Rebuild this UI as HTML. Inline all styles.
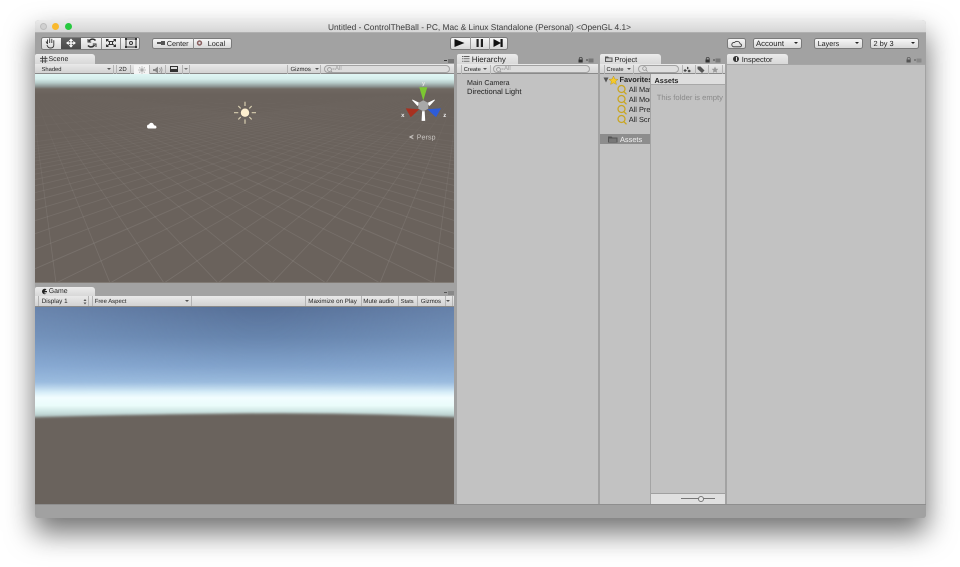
<!DOCTYPE html>
<html><head><meta charset="utf-8"><title>Untitled - ControlTheBall</title>
<style>
html,body{margin:0;padding:0;background:#fff;width:960px;height:567px;overflow:hidden}
*{box-sizing:border-box}
body{font-family:"Liberation Sans",sans-serif;color:#222;text-rendering:geometricPrecision}
.a,.t,.b,.tab,.bar,.p{position:absolute}
#shadow{position:absolute;left:35px;top:20px;width:890.500px;height:497px;border-radius:4px;box-shadow:0 15px 28px 1px rgba(0,0,0,.55)}
#win{position:absolute;left:35px;top:19.500px;width:890.500px;height:498px;background:#a2a2a2;border-radius:4px 4px 3px 3px;overflow:hidden;filter:blur(.25px)}
#in{position:absolute;left:-35px;top:-19.500px;width:960px;height:567px}
.t{white-space:nowrap;font-size:7.400px;line-height:10px;color:#222}
.b{background:linear-gradient(#f6f6f6,#d8d8d8);border:1px solid #7a7a7a;border-radius:2.500px}
.tab{background:linear-gradient(#ebebeb,#d8d8d8);border-radius:2px 3px 0 0;top:54.300px;height:10px}
.bar{background:linear-gradient(#e9e9e9,#d3d3d3);border-bottom:1px solid #8a8a8a}
.p{background:#c2c2c2}
.v{position:absolute;width:1px;background:#b4b4b4}
.s{position:absolute;border:1px solid #a2a2a2;border-radius:5px;background:#dcdcdc;height:8px}
.ar{position:absolute;width:0;height:0;border:2px solid transparent;border-top:2.500px solid #555;border-bottom:0}
svg{position:absolute;overflow:visible}
</style></head><body>
<div id="shadow"></div>
<div id="win"><div id="in">

<!-- title bar -->
<div class="a" style="left:35px;top:19px;width:891px;height:14px;background:linear-gradient(#ececec,#d6d6d6);border-bottom:1px solid #b0b0b0"></div>
<div class="a" style="left:39.500px;top:23px;width:7.400px;height:7.400px;border-radius:50%;background:#d0d0d0;border:1px solid #bdbdbd"></div>
<div class="a" style="left:52px;top:23px;width:7.400px;height:7.400px;border-radius:50%;background:#f9b92e"></div>
<div class="a" style="left:64.500px;top:23px;width:7.400px;height:7.400px;border-radius:50%;background:#27c93f"></div>
<div class="t" style="left:328px;top:21.500px;font-size:8.350px;color:#3c3c3c">Untitled - ControlTheBall - PC, Mac &amp; Linux Standalone (Personal) &lt;OpenGL 4.1&gt;</div>

<!-- tools -->
<div class="b" style="left:41.300px;top:36.700px;width:98.400px;height:13px"></div>
<div class="a" style="left:61px;top:37.500px;width:20px;height:11.500px;background:linear-gradient(#606060,#4a4a4a)"></div>
<div class="a" style="left:100.500px;top:37px;width:1px;height:12px;background:#8a8a8a"></div>
<div class="a" style="left:120.200px;top:37px;width:1px;height:12px;background:#8a8a8a"></div>
<svg style="left:41px;top:36px" width="100" height="14" viewBox="0 0 100 14" fill="none">
 <path d="M6.500 8L5 5.500M6.500 8V3.500M8.700 7V2.300M10.800 7V2.800M12.800 7.500V4.200V9c0 2-1.200 3-3.300 3-2 0-2.700-1-3.600-3" stroke="#333" stroke-width=".9"/>
 <path d="M30 2.500l2.200 2.500h-1.500v1.500h1.600V5l2.600 2-2.600 2V7.700h-1.600v1.500h1.500L30 11.600l-2.200-2.400h1.500V7.700h-1.600V9L25 7l2.700-2v1.500h1.600V5h-1.500z" fill="#fff"/>
 <path d="M54.500 4.500a4 4 0 0 0-6.500 .7M47 9.500a4 4 0 0 0 6.500-.5" stroke="#333" stroke-width="1.500"/>
 <path d="M47 3v3h3.200M55 11V8h-3.200" stroke="#333" stroke-width="1"/>
 <path d="M65 3h3l-3 3zM75 3h-3l3 3zM65 11h3l-3-3zM75 11h-3l3-3z" fill="#333"/>
 <path d="M66 4l2.500 2M74 4l-2.500 2M66 10l2.500-2M74 10l-2.500-2" stroke="#333"/>
 <rect x="68.500" y="5.500" width="3" height="3" stroke="#333"/>
 <rect x="85" y="3" width="10" height="8" stroke="#333" stroke-width="1"/>
 <path d="M84 2h2v2h-2zM94 2h2v2h-2zM84 10h2v2h-2zM94 10h2v2h-2z" fill="#333"/>
 <circle cx="90" cy="7" r="1.500" stroke="#333"/>
</svg>
<!-- center/local -->
<div class="b" style="left:152.300px;top:37.500px;width:79.400px;height:11.500px"></div>
<div class="a" style="left:192.500px;top:38px;width:1px;height:10.500px;background:#8a8a8a"></div>
<svg style="left:157px;top:40px" width="70" height="7"><path d="M0 2h4V1h4v4H4V4H0z" fill="#555"/><circle cx="42.500" cy="3" r="2.700" fill="#8a6060"/><circle cx="42.500" cy="3" r="1.200" fill="#ddd"/></svg>
<div class="t" style="left:166.700px;top:38.500px;font-size:7.300px">Center</div>
<div class="t" style="left:207.700px;top:38.500px;font-size:7.300px">Local</div>
<!-- play -->
<div class="b" style="left:449.700px;top:36.700px;width:58.600px;height:13px"></div>
<div class="a" style="left:469.500px;top:37px;width:1px;height:12.500px;background:#9a9a9a"></div>
<div class="a" style="left:488.800px;top:37px;width:1px;height:12.500px;background:#9a9a9a"></div>
<svg style="left:449px;top:36px" width="60" height="14"><path d="M5.500 3l10 4-10 4z" fill="#111"/><path d="M27.500 3h2.200v8h-2.200zM31.800 3H34v8h-2.200z" fill="#222"/><path d="M44.500 3l7.500 4-7.500 4zM51.500 3h2.200v8h-2.200z" fill="#111"/></svg>
<!-- right buttons -->
<div class="b" style="left:726.700px;top:37.700px;width:19px;height:11px"></div>
<svg style="left:731px;top:39.500px" width="11" height="8" fill="none"><path d="M2.500 6.800h6.300a1.500 1.500 0 0 0 .3-3A3.200 3.200 0 0 0 3.500 2.500 2.200 2.200 0 0 0 2.500 6.800z" stroke="#333" stroke-width=".8"/></svg>
<div class="b" style="left:752.700px;top:37.700px;width:49px;height:11px"></div>
<div class="t" style="left:756px;top:38.500px;font-size:7.750px">Account</div><div class="ar" style="left:793.500px;top:42px;border-top-color:#222"></div>
<div class="b" style="left:814.300px;top:37.700px;width:49px;height:11px"></div>
<div class="t" style="left:817.700px;top:38.500px;font-size:7.200px">Layers</div><div class="ar" style="left:855px;top:42px;border-top-color:#222"></div>
<div class="b" style="left:870px;top:37.700px;width:48.700px;height:11px"></div>
<div class="t" style="left:873.500px;top:38.500px;font-size:7.400px">2 by 3</div><div class="ar" style="left:910.500px;top:42px;border-top-color:#222"></div>

<!-- SCENE -->
<div class="tab" style="left:35px;width:60px"></div>
<svg style="left:40px;top:55.500px" width="8" height="6" fill="none" stroke="#333" stroke-width=".8"><path d="M2.500 0v7M5.200 0v7M0 2.300h7.500M0 5h7.500"/></svg>
<div class="t" style="left:48.500px;top:54.500px;font-size:7px">Scene</div>
<svg style="left:444px;top:57.500px" width="11" height="6"><path d="M0 2.500h3" stroke="#333"/><rect x="4" y="1" width="6" height="4" fill="#777"/></svg>
<div class="bar" style="left:35px;top:64.300px;width:419px;height:9.900px"></div>
<div class="t" style="left:41.500px;top:64.600px;font-size:5.800px">Shaded</div><div class="ar" style="left:106.500px;top:68px"></div>
<div class="v" style="left:112.500px;top:65px;height:9px"></div><div class="v" style="left:116px;top:65px;height:9px"></div>
<div class="t" style="left:119px;top:64.600px;font-size:6px">2D</div>
<div class="v" style="left:130px;top:65px;height:9px"></div>
<div class="a" style="left:134px;top:65px;width:15px;height:9px;background:#f4f4f4"></div>
<svg style="left:137px;top:65.500px" width="10" height="8" stroke="#777" fill="none"><circle cx="5" cy="4" r="1.700" fill="#aaa" stroke="none"/><path d="M5 .5v1M5 6.500v1M1.500 4h1M7.500 4h1M2.500 1.500l.7.700M7.500 1.500l-.7.700M2.500 6.500l.7-.700M7.500 6.500l-.7-.700" stroke-width=".7"/></svg>
<svg style="left:153px;top:65.500px" width="10" height="8"><path d="M0 3h2l3-2.500v7L2 5H0z" fill="#888"/><path d="M6.500 2q1.500 2 0 4M8 1q2 3 0 6" stroke="#888" fill="none" stroke-width=".7"/></svg>
<div class="v" style="left:149px;top:65px;height:9px"></div><div class="v" style="left:165px;top:65px;height:9px"></div>
<svg style="left:170px;top:66px" width="9" height="7"><rect width="8" height="6" fill="#333"/><rect x="1" y="1" width="6" height="2" fill="#ddd"/></svg>
<div class="v" style="left:182px;top:65px;height:9px"></div><div class="ar" style="left:183.500px;top:68px;border-top-color:#777"></div><div class="v" style="left:189px;top:65px;height:9px"></div>
<div class="v" style="left:287px;top:65px;height:9px"></div>
<div class="t" style="left:290.500px;top:64.600px;font-size:6px">Gizmos</div><div class="ar" style="left:315px;top:68px"></div><div class="v" style="left:320px;top:65px;height:9px"></div>
<div class="s" style="left:324px;top:65px;width:126px"></div>
<svg style="left:327px;top:66.500px" width="8" height="6" fill="none" stroke="#8d8d8d" stroke-width=".7"><circle cx="2.500" cy="2.500" r="1.900"/><path d="M4 4l1.200 1.200M5.500 2h2"/></svg>
<div class="t" style="left:335px;top:64.300px;font-size:6px;color:#9a9a9a">All</div>

<div class="a" style="left:35px;top:74px;width:419px;height:209px;background:linear-gradient(#e0f6f4 0,#d6eeec 5px,#b5c9c7 9px,#8c9492 12.500px,#6f6861 15px,#6a625c 20px,#6a625c 100%);border-bottom:1px solid #807a74;overflow:hidden">
 <svg style="left:-35px;top:-74px" width="960" height="567">
  <defs>
   <linearGradient id="f" gradientUnits="userSpaceOnUse" x1="0" y1="90" x2="0" y2="283"><stop offset="0" stop-color="#fff" stop-opacity="0"/><stop offset=".2" stop-color="#fff" stop-opacity=".025"/><stop offset=".5" stop-color="#fff" stop-opacity=".07"/><stop offset="1" stop-color="#fff" stop-opacity=".1"/></linearGradient>
   <path id="g" d="M30 85l26 198M30 85l80 198M30 85l134 198M30 85l188 198M30 85l242 198M30 85l296 198M30 85l350 198M30 85l404 198M30 85l512 198M30 85l566 198M30 85l620 198M30 85l674 198M30 85l728 198M30 85l782 198M30 85l836 198M30 85l890 198M30 85l944 198M30 85l998 198M30 85l1052 198M30 85l1106 198M30 85l1160 198M30 85l1214 198M30 85l1268 198M30 85l1322 198M30 85l1376 198M30 85l1484 198M30 85l1700 198M30 85l2050 198M30 85l2600 198" fill="none" stroke="url(#f)" stroke-width=".8"/>
  </defs>
  <use href="#g"/>
  <use href="#g" transform="translate(490 0) scale(-1 1)"/>
  <path d="M30 85l458 198M460 85l-458 198" stroke="url(#f)" stroke-width="1" fill="none"/>
  <!-- sun -->
  <g stroke="#d8ceb0" stroke-width="1.200">
   <path d="M245 101.700v4.300M245 119.400v4.300M234 112.700h4.300M251.700 112.700h4.300M238.300 106l2.400 2.400M249.300 117l2.400 2.400M251.700 106l-2.400 2.400M240.700 117l-2.400 2.400"/>
  </g>
  <circle cx="245" cy="112.700" r="4.200" fill="#fff0d0"/>
  <!-- cloud / camera -->
  <path d="M147 126.500q0-2 2-2q1-2.500 3.500-1.500q1.500 1.200 1.500 2.200q2.500 .3 2.500 2q0 1.300-2 1.300h-6q-1.500 0-1.500-2z" fill="#fff"/>
  <!-- gizmo -->
  <path d="M419.300 87.300h8L423.300 100.500z" fill="#7cc832"/>
  <path d="M405.700 108.300l5 9 8.600-8z" fill="#a8301f"/>
  <path d="M441 108.300l-5 9-8.600-8z" fill="#2e5cd8"/>
  <path d="M412.500 100l7 3.300-2 2.200zM434.500 100l-7 3.300 2 2.200z" fill="#fff" stroke="#fff" stroke-width=".8" stroke-linejoin="round"/>
  <path d="M422 120.500h2.800l-.5-9h-1.800z" fill="#fff" stroke="#fff" stroke-width=".8" stroke-linejoin="round"/>
  <path d="M423.300 100.200l5 2.800v5.600l-5 2.800-5-2.800V103z" fill="#a8a8a8"/>
  <text x="423.500" y="85" font-size="5.500" fill="#e8e8e8" text-anchor="middle" font-family="Liberation Sans" font-weight="bold">y</text>
  <text x="402.800" y="117" font-size="6" fill="#eee" text-anchor="middle" font-family="Liberation Sans" font-weight="bold">x</text>
  <text x="444.800" y="117" font-size="6" fill="#eee" text-anchor="middle" font-family="Liberation Sans" font-weight="bold">z</text>
  <path d="M413.500 135l-4 2 4 2M410 137h3" stroke="#c8c4c0" fill="none" stroke-width=".7"/>
  <text x="416.700" y="139.700" font-size="7.200" fill="#c8c4c0" font-family="Liberation Sans">Persp</text>
 </svg>
</div>

<!-- GAME -->
<div class="tab" style="left:35px;top:286.500px;width:60px;height:9.500px"></div>
<svg style="left:41px;top:288px" width="7" height="7"><path d="M5.500 1.500A2.700 2.700 0 1 0 5.500 5.500H3.500V4.300h2.500V3H3.500z" fill="#222"/></svg>
<div class="t" style="left:48.800px;top:286.800px;font-size:6.900px">Game</div>
<svg style="left:444px;top:289.500px" width="11" height="6"><path d="M0 2.500h3" stroke="#555"/><rect x="4" y="1" width="6" height="4" fill="#888"/></svg>
<div class="bar" style="left:35px;top:295.700px;width:419px;height:11px"></div>
<div class="v" style="left:38px;top:296px;height:10px"></div>
<div class="t" style="left:41.700px;top:296.800px;font-size:6.300px">Display 1</div>
<svg style="left:82.500px;top:299px" width="4" height="6"><path d="M2 0l1.500 2h-3zM2 5.500l1.500-2h-3z" fill="#555"/></svg>
<div class="v" style="left:87.500px;top:296px;height:10px"></div><div class="v" style="left:91.500px;top:296px;height:10px"></div>
<div class="t" style="left:94.700px;top:296.800px;font-size:5.950px">Free Aspect</div><div class="ar" style="left:184.500px;top:300px"></div>
<div class="v" style="left:190.500px;top:296px;height:10px"></div>
<div class="v" style="left:305px;top:296px;height:10px"></div>
<div class="t" style="left:308.300px;top:296.800px;font-size:6.200px">Maximize on Play</div>
<div class="v" style="left:360.500px;top:296px;height:10px"></div>
<div class="t" style="left:363.300px;top:296.800px;font-size:6.200px">Mute audio</div>
<div class="v" style="left:397.500px;top:296px;height:10px"></div>
<div class="t" style="left:400.700px;top:296.800px;font-size:5.700px">Stats</div>
<div class="v" style="left:416.500px;top:296px;height:10px"></div>
<div class="t" style="left:420.700px;top:296.800px;font-size:6px">Gizmos</div>
<div class="v" style="left:444.500px;top:296px;height:10px"></div><div class="ar" style="left:445.500px;top:299.500px"></div><div class="v" style="left:451.500px;top:296px;height:10px"></div>

<div class="a" style="left:35px;top:306.700px;width:419px;height:197.300px;overflow:hidden;background:#6b635d">
 <svg style="left:0;top:0" width="419" height="198">
  <defs>
   <linearGradient id="sky" gradientUnits="userSpaceOnUse" x1="0" y1="0" x2="0" y2="112">
    <stop offset="0" stop-color="#566f97"/><stop offset=".27" stop-color="#6482ab"/><stop offset=".53" stop-color="#7fa0c9"/><stop offset=".67" stop-color="#9abbdd"/><stop offset=".76" stop-color="#d8eef8"/><stop offset=".81" stop-color="#f2fdff"/><stop offset=".88" stop-color="#eafcfa"/><stop offset=".93" stop-color="#cfe6e4"/><stop offset="1" stop-color="#a9bcbb"/>
   </linearGradient>
   <radialGradient id="vig" gradientUnits="userSpaceOnUse" cx="225" cy="-15" r="270">
    <stop offset="0" stop-color="#a6c8f0" stop-opacity="0"/><stop offset="1" stop-color="#a6c8f0" stop-opacity=".28"/>
   </radialGradient>
   <linearGradient id="fd" x1="0" y1="0" x2="0" y2="1"><stop offset="0" stop-color="#fff"/><stop offset=".7" stop-color="#fff"/><stop offset="1" stop-color="#000"/></linearGradient>
   <mask id="mk"><rect width="419" height="88" fill="url(#fd)"/></mask>
   <filter id="sb" x="-5%" y="-5%" width="110%" height="110%"><feGaussianBlur stdDeviation="1.200"/></filter>
  </defs>
  <rect width="419" height="114" fill="url(#sky)"/>
  <rect width="419" height="88" fill="url(#vig)" mask="url(#mk)"/>
  <path d="M-10 110.500Q100 107.500 210 106.500T429 110.500V205H-10z" fill="#6b635d" filter="url(#sb)"/>
 </svg>
</div>

<!-- HIERARCHY -->
<div class="tab" style="left:456.700px;width:61.300px"></div>
<svg style="left:462px;top:56px" width="8" height="6" stroke="#333" stroke-width=".7"><path d="M1.500 .5h6M1.500 2.800h6M1.500 5.200h6M0 .5h1M0 2.800h1M0 5.200h1"/></svg>
<div class="t" style="left:471.700px;top:54.500px;font-size:8px">Hierarchy</div>
<svg style="left:578px;top:57px" width="18" height="7"><path d="M1.200 2.500v-.7a1.500 1.500 0 0 1 3 0v.7" stroke="#333" fill="none" stroke-width=".7"/><rect x=".5" y="2.500" width="4.200" height="3" fill="#333"/><path d="M8 3h2" stroke="#444"/><rect x="10.500" y="1.500" width="5" height="4" fill="#777"/></svg>
<div class="p" style="left:456.700px;top:74px;width:141.300px;height:430px"></div>
<div class="bar" style="left:456.700px;top:64.300px;width:141.300px;height:9.900px"></div>
<div class="v" style="left:460.500px;top:65px;height:9px"></div>
<div class="t" style="left:463.700px;top:64.800px;font-size:5.700px">Create</div><div class="ar" style="left:483px;top:67.500px"></div><div class="v" style="left:489.500px;top:65px;height:9px"></div>
<div class="s" style="left:493.300px;top:65px;width:96.700px"></div>
<svg style="left:496px;top:66.500px" width="8" height="6" fill="none" stroke="#8d8d8d" stroke-width=".7"><circle cx="2.500" cy="2.500" r="1.900"/><path d="M4 4l1.200 1.200M5.500 2h2"/></svg>
<div class="t" style="left:504px;top:64.300px;font-size:6px;color:#9a9a9a">All</div>
<div class="t" style="left:467px;top:77.500px;font-size:7.100px">Main Camera</div>
<div class="t" style="left:467px;top:87.300px;font-size:7.600px">Directional Light</div>

<!-- PROJECT -->
<div class="tab" style="left:600px;width:60.700px"></div>
<svg style="left:605px;top:56px" width="8" height="6"><path d="M0 .5h3l1 1h3.500v4.500H0z" fill="#555"/><rect x="1" y="2.300" width="5.500" height="2.800" fill="#ccc"/></svg>
<div class="t" style="left:614.500px;top:54.500px;font-size:7.300px">Project</div>
<svg style="left:705px;top:57px" width="18" height="7"><path d="M1.200 2.500v-.7a1.500 1.500 0 0 1 3 0v.7" stroke="#333" fill="none" stroke-width=".7"/><rect x=".5" y="2.500" width="4.200" height="3" fill="#333"/><path d="M8 3h2" stroke="#444"/><rect x="10.500" y="1.500" width="5" height="4" fill="#777"/></svg>
<div class="p" style="left:600px;top:74px;width:125.300px;height:430px"></div>
<div class="a" style="left:650px;top:74px;width:1px;height:430px;background:#a4a4a4"></div>
<div class="bar" style="left:600px;top:64.300px;width:125.300px;height:10px"></div>
<div class="v" style="left:603.500px;top:65px;height:9px"></div>
<div class="t" style="left:606.500px;top:65.300px;font-size:5.700px">Create</div><div class="ar" style="left:627px;top:68px"></div><div class="v" style="left:632.500px;top:65px;height:9px"></div>
<div class="s" style="left:638px;top:65px;width:41px;background:#dedede"></div>
<svg style="left:642px;top:66px" width="6" height="6" fill="none" stroke="#888" stroke-width=".7"><circle cx="2.500" cy="2.500" r="1.800"/><path d="M3.800 3.800L5.500 5.500"/></svg>
<div class="v" style="left:681.500px;top:65px;height:9px"></div><div class="v" style="left:694.500px;top:65px;height:9px"></div><div class="v" style="left:708px;top:65px;height:9px"></div><div class="v" style="left:721.500px;top:65px;height:9px"></div>
<svg style="left:682px;top:65px" width="42" height="9"><path d="M5 1.500l2 1.500-2 1.500zM3 4l2 1.500L3 7 1.500 5.500zM7 4.500l2 1.500-2 1.500L5.500 6z" fill="#444"/><path d="M15.500 1.500h3l4 4-2.500 2.500-4.500-4z" fill="#555"/><path d="M33 1.500l1 2.200 2.300.2-1.700 1.600.5 2.300-2.100-1.200-2.100 1.200.5-2.300-1.700-1.600 2.300-.2z" fill="#999"/></svg>
<svg style="left:603px;top:76px" width="16" height="9"><path d="M.5 1.500h5L3 6.500z" fill="#555"/><path d="M10.500 0l1.400 3 3.100.3-2.300 2.100.7 3.100-2.900-1.700-2.900 1.700.7-3.100L6 3.300 9.100 3z" fill="#f5c92a" stroke="#a88a20" stroke-width=".4"/></svg>
<div class="t" style="left:619.500px;top:75.300px;font-size:7.400px;font-weight:bold;width:30.500px;overflow:hidden">Favorites</div>
<svg style="left:616px;top:85px" width="12" height="42" fill="none" stroke="#c9a623" stroke-width="1.300"><circle cx="5.500" cy="4" r="3.500"/><path d="M8 6.800l2.500 2.500"/><circle cx="5.500" cy="14" r="3.500"/><path d="M8 16.800l2.500 2.500"/><circle cx="5.500" cy="24" r="3.500"/><path d="M8 26.800l2.500 2.500"/><circle cx="5.500" cy="34" r="3.500"/><path d="M8 36.800l2.500 2.500"/></svg>
<div class="t" style="left:628.700px;top:85.300px;font-size:7.400px;width:21.300px;overflow:hidden">All Materials</div>
<div class="t" style="left:628.700px;top:95.300px;font-size:7.400px;width:21.300px;overflow:hidden">All Models</div>
<div class="t" style="left:628.700px;top:105.300px;font-size:7.400px;width:21.300px;overflow:hidden">All Prefabs</div>
<div class="t" style="left:628.700px;top:115.300px;font-size:7.400px;width:21.300px;overflow:hidden">All Scripts</div>
<div class="a" style="left:600px;top:134px;width:50px;height:10px;background:#8d8d8d"></div>
<svg style="left:608px;top:135.500px" width="10" height="7"><path d="M0 .5h3.500l1 1H9.500v5H0z" fill="#555"/><rect x="1" y="2.500" width="7.500" height="3.500" fill="#777"/></svg>
<div class="t" style="left:620px;top:134.500px;font-size:7.400px;color:#f2f2f2">Assets</div>
<div class="a" style="left:651px;top:74px;width:74.300px;height:11px;background:#dedede;border-bottom:1px solid #a8a8a8"></div>
<div class="t" style="left:654.500px;top:76px;font-size:7.300px;font-weight:bold">Assets</div>
<div class="t" style="left:656.700px;top:92.500px;font-size:7.650px;color:#8a8a8a">This folder is empty</div>
<div class="a" style="left:651px;top:493px;width:74.300px;height:11px;background:#e0e0e0;border-top:1px solid #a0a0a0"></div>
<div class="a" style="left:681px;top:498px;width:34px;height:1.300px;background:#777"></div>
<div class="a" style="left:697.500px;top:496px;width:6px;height:6px;border-radius:50%;background:#e6e6e6;border:1px solid #777"></div>

<!-- INSPECTOR -->
<div class="tab" style="left:726.700px;width:61.300px"></div>
<div class="a" style="left:733px;top:56px;width:6px;height:6px;border-radius:50%;background:#333"></div>
<div class="a" style="left:735.500px;top:57px;width:1px;height:3.500px;background:#ddd"></div>
<div class="t" style="left:741.700px;top:54.500px;font-size:7.500px">Inspector</div>
<svg style="left:906px;top:57px" width="18" height="7"><path d="M1.200 2.500v-.7a1.500 1.500 0 0 1 3 0v.7" stroke="#555" fill="none" stroke-width=".7"/><rect x=".5" y="2.500" width="4.200" height="3" fill="#555"/><path d="M8 3h2" stroke="#555"/><rect x="10.500" y="1.500" width="5" height="4" fill="#888"/></svg>
<div class="p" style="left:726.700px;top:64.300px;width:198.800px;height:439.700px;border-top:1px solid #a5a5a5"></div>

<!-- status -->
<div class="a" style="left:35px;top:504px;width:891px;height:13.500px;background:#a1a1a1;border-top:1px solid #8e8e8e"></div>
</div></div>
</body></html>
